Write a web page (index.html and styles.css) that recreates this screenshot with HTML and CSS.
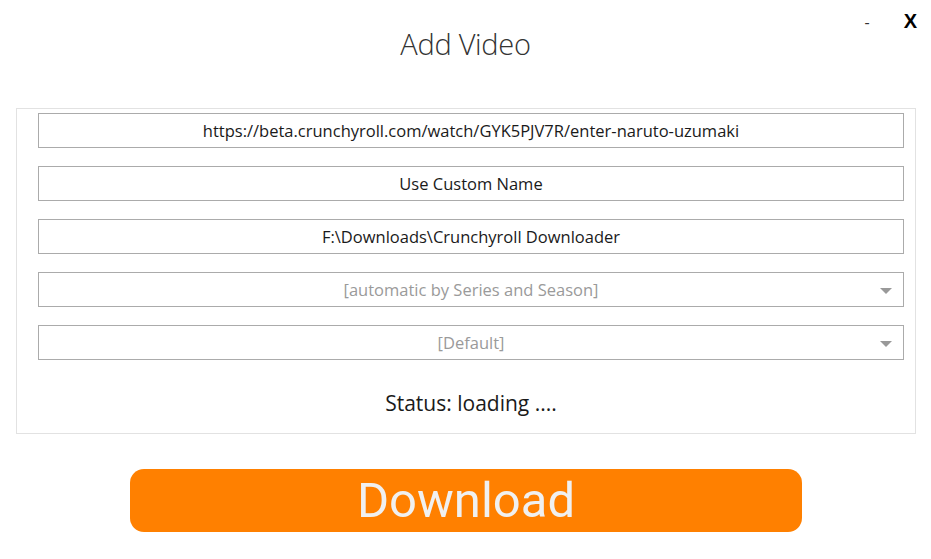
FILE: index.html
```html
<!DOCTYPE html>
<html>
<head>
<meta charset="utf-8">
<link rel="stylesheet" href="styles.css">
</head>
<body>
<div class="window">
  <header class="header">
    <h1 class="title">Add Video</h1>
    <div class="controls">
      <span class="min">-</span>
      <span class="close">X</span>
    </div>
  </header>
  <section class="panel">
    <div class="field">https://beta.crunchyroll.com/watch/GYK5PJV7R/enter-naruto-uzumaki</div>
    <div class="field">Use Custom Name</div>
    <div class="field">F:\Downloads\Crunchyroll Downloader</div>
    <div class="field select"><span class="placeholder">[automatic by Series and Season]</span><span class="arrow"></span></div>
    <div class="field select"><span class="placeholder">[Default]</span><span class="arrow"></span></div>
    <div class="status">Status: loading ....</div>
  </section>
  <div class="actions">
    <button class="download">Download</button>
  </div>
</div>
</body>
</html>
```
FILE: styles.css
```css
*, *::before, *::after {
  box-sizing: border-box;
}
html, body {
  margin: 0;
  padding: 0;
  background: #ffffff;
}
.window {
  width: 931px;
  height: 559px;
  display: flex;
  flex-direction: column;
  font-family: "Open Sans", "Noto Sans", sans-serif;
  color: #1a1a1a;
}
.header {
  position: relative;
  height: 108px;
  display: flex;
  justify-content: center;
}
.title {
  margin: 25px 0 0 0;
  font-size: 29px;
  font-weight: 300;
  line-height: 38px;
  color: #333;
  letter-spacing: -0.3px;
}
.controls {
  position: absolute;
  top: 10px;
  right: 14px;
  display: flex;
  align-items: center;
  gap: 34px;
}
.min {
  font-size: 16px;
  color: #333;
}
.close {
  font-family: "Liberation Sans", sans-serif;
  font-size: 20px;
  font-weight: 700;
  color: #000;
}
.panel {
  margin-left: 16px;
  width: 900px;
  height: 326px;
  border: 1px solid #e2e2e2;
  padding: 4px 11px 0 21px;
  display: flex;
  flex-direction: column;
  gap: 18px;
}
.field {
  position: relative;
  height: 35px;
  flex: none;
  border: 1px solid #ababab;
  display: flex;
  align-items: center;
  justify-content: center;
  font-size: 16.5px;
  color: #1a1a1a;
}
.select .placeholder {
  color: #9a9a9a;
}
.arrow {
  position: absolute;
  right: 11px;
  top: 15px;
  width: 0;
  height: 0;
  border-left: 6px solid transparent;
  border-right: 6px solid transparent;
  border-top: 6px solid #999;
}
.status {
  margin-top: 11px;
  text-align: center;
  font-size: 21px;
  color: #1a1a1a;
}
.actions {
  margin-top: 35px;
  padding-left: 130px;
}
.download {
  width: 672px;
  height: 63px;
  border: none;
  border-radius: 14px;
  background: #ff8000;
  color: #f0f0f0;
  font-family: Roboto, "Liberation Sans", sans-serif;
  font-size: 49px;
  padding: 0;
  line-height: 63px;
}
```
